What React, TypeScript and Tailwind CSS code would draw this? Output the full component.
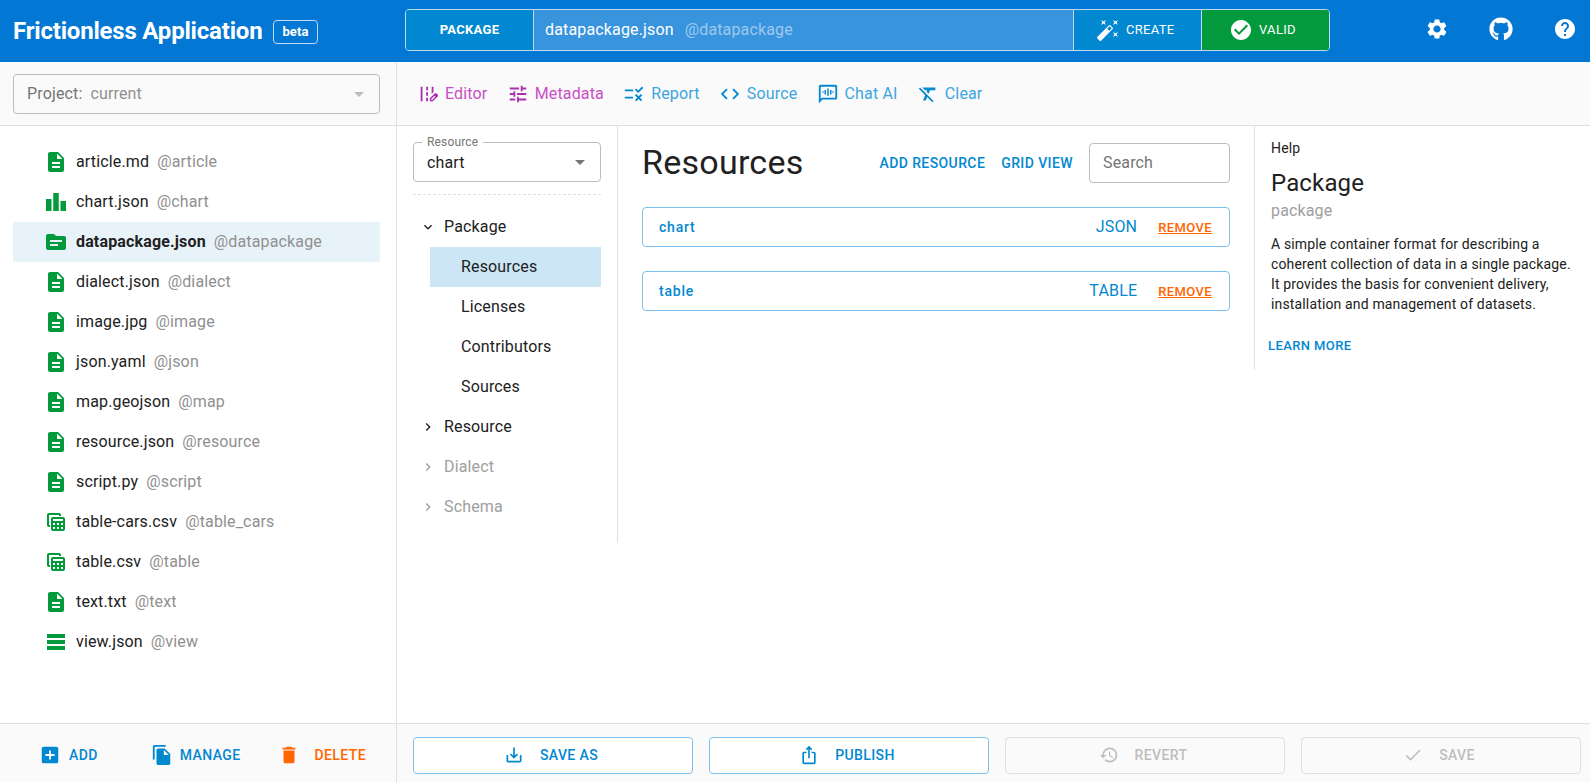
import { FaGithub } from "react-icons/fa";
import {
  MdAddBox,
  MdArrowDropDown,
  MdAutoFixHigh,
  MdCheck,
  MdCheckCircle,
  MdChevronRight,
  MdCode,
  MdDelete,
  MdDescription,
  MdEditRoad,
  MdExpandMore,
  MdFileCopy,
  MdFormatClear,
  MdHelp,
  MdHistory,
  MdIosShare,
  MdLeaderboard,
  MdOutlineTableView,
  MdRule,
  MdSaveAlt,
  MdSettings,
  MdSource,
  MdTableRows,
  MdTune,
} from "react-icons/md";

const files = [
  { name: "article.md", id: "@article", Icon: MdDescription },
  { name: "chart.json", id: "@chart", Icon: MdLeaderboard },
  { name: "datapackage.json", id: "@datapackage", Icon: MdSource, active: true },
  { name: "dialect.json", id: "@dialect", Icon: MdDescription },
  { name: "image.jpg", id: "@image", Icon: MdDescription },
  { name: "json.yaml", id: "@json", Icon: MdDescription },
  { name: "map.geojson", id: "@map", Icon: MdDescription },
  { name: "resource.json", id: "@resource", Icon: MdDescription },
  { name: "script.py", id: "@script", Icon: MdDescription },
  { name: "table-cars.csv", id: "@table_cars", Icon: MdOutlineTableView },
  { name: "table.csv", id: "@table", Icon: MdOutlineTableView },
  { name: "text.txt", id: "@text", Icon: MdDescription },
  { name: "view.json", id: "@view", Icon: MdTableRows },
];

function ChatAiIcon({ className }: { className?: string }) {
  return (
    <svg viewBox="0 0 24 24" className={className} fill="currentColor">
      <path d="M20 2H4c-1.1 0-2 .9-2 2v18l4-4h14c1.1 0 2-.9 2-2V4c0-1.1-.9-2-2-2zm0 14H5.2L4 17.2V4h16v12z" />
      <path d="M11.2 6h1.6v8h-1.6zM8.2 7.5h1.6v5H8.2zM14.2 7.5h1.6v5h-1.6zM6 9h1.2v2H6zM16.8 9H18v2h-1.2z" />
    </svg>
  );
}

const tabs = [
  { label: "Editor", Icon: MdEditRoad, purple: true },
  { label: "Metadata", Icon: MdTune, purple: true },
  { label: "Report", Icon: MdRule },
  { label: "Source", Icon: MdCode },
  { label: "Chat AI", Icon: ChatAiIcon },
  { label: "Clear", Icon: MdFormatClear },
];

function Cell({ name, type }: { name: string; type: string }) {
  return (
    <div className="flex h-10 items-center rounded border border-[#7cc1ec] pl-4 pr-[17px]">
      <span className="-mt-px text-sm font-medium tracking-[0.8px] text-[#0288d1]">{name}</span>
      <span className="ml-auto text-base text-[#0288d1]">{type}</span>
      <span className="ml-[21px] mt-[2px] text-[13px] font-medium tracking-[0.4px] text-[#ff6600] underline">REMOVE</span>
    </div>
  );
}

function FooterButton({
  label,
  icon,
  disabled,
}: {
  label: string;
  icon: React.ReactNode;
  disabled?: boolean;
}) {
  return (
    <div
      className={
        disabled
          ? "flex h-[37px] w-[280px] items-center justify-center gap-4 rounded border border-[#e0e0e0] pr-1 text-sm font-medium tracking-[0.4px] text-[#bdbdbd]"
          : "flex h-[37px] w-[280px] items-center justify-center gap-4 rounded border border-[#7cc1ec] bg-white pr-1 text-sm font-medium tracking-[0.4px] text-[#0288d1]"
      }
    >
      {icon}
      {label}
    </div>
  );
}

export default function App() {
  return (
    <div className="flex h-screen flex-col overflow-hidden bg-white font-['Roboto',sans-serif] tracking-[0.15px] text-[#212121]">
      {/* header */}
      <header className="flex h-[62px] shrink-0 items-center bg-[#0277d4] text-white">
        <div className="flex w-[405px] shrink-0 items-center pl-[13px]">
          <span className="text-2xl font-bold tracking-[-0.2px]">Frictionless Application</span>
          <span className="ml-[11px] mt-[2px] rounded border border-[#bcd9f2] px-2 py-[2px] text-[13px] font-bold leading-[18px]">
            beta
          </span>
        </div>
        <div className="-mt-[2px] flex h-[42px] w-[925px] overflow-hidden rounded border border-[#bcd9f2]">
          <div className="flex w-[127px] items-center justify-center bg-[#0288d1] text-[13px] font-bold tracking-[0.3px]">
            PACKAGE
          </div>
          <div className="flex flex-1 items-center gap-[11px] border-l border-[#bcd9f2] bg-[#3994de] pl-[11px] text-base">
            <span>datapackage.json</span>
            <span className="text-white/50">@datapackage</span>
          </div>
          <div className="flex w-[128px] items-center gap-[6px] border-l border-[#bcd9f2] bg-[#0288d1] pl-[22px] text-[13px] tracking-[0.3px]">
            <MdAutoFixHigh className="h-6 w-6" />
            CREATE
          </div>
          <div className="flex w-[128px] items-center gap-[6px] border-l border-[#bcd9f2] bg-[#029a3c] pl-[27px] text-[13px] tracking-[0.3px]">
            <MdCheckCircle className="h-6 w-6" />
            VALID
          </div>
        </div>
        <div className="ml-auto flex items-center gap-10 pb-[5px] pr-[13px]">
          <MdSettings className="h-6 w-6" />
          <FaGithub className="h-6 w-6" />
          <MdHelp className="h-6 w-6" />
        </div>
      </header>

      <div className="flex min-h-0 flex-1">
        {/* file browser */}
        <aside className="flex w-[397px] shrink-0 flex-col border-r border-[#e0e0e0]">
          <div className="flex h-[64px] shrink-0 items-center border-b border-[#e0e0e0] bg-[#fafafa] pl-[13px] pr-4">
            <div className="flex h-10 w-full items-center rounded border border-[#bdbdbd] pl-[13px] pr-2 text-base">
              <span className="text-[#757575]">Project:</span>
              <span className="ml-2 text-[#909090]">current</span>
              <MdArrowDropDown className="ml-auto h-6 w-6 text-[#bdbdbd]" />
            </div>
          </div>
          <div className="flex-1 pl-[13px] pr-[16px] pt-[16px]">
            {files.map((file) => (
              <div
                key={file.name}
                className={file.active ? "flex h-10 items-center bg-[#e8f3f9] pl-[31px]" : "flex h-10 items-center pl-[31px]"}
              >
                <file.Icon className="h-[24px] w-[24px] shrink-0 text-[#029a3c]" />
                <span className={file.active ? "ml-2 font-bold" : "ml-2"}>{file.name}</span>
                <span className="ml-[8px] text-[#909090]">{file.id}</span>
              </div>
            ))}
          </div>
          <div className="flex h-[59px] shrink-0 items-center border-t border-[#e0e0e0] bg-[#fafafa] pl-[39px] pt-1 text-sm font-medium tracking-[0.4px]">
            <div className="flex items-center gap-2 text-[#0288d1]">
              <MdAddBox className="h-[22px] w-[22px]" />
              ADD
            </div>
            <div className="ml-[53px] flex items-center gap-[7px] text-[#0288d1]">
              <MdFileCopy className="h-[22px] w-[22px]" />
              MANAGE
            </div>
            <div className="ml-[37px] flex items-center gap-[15px] text-[#ff6600]">
              <MdDelete className="h-[22px] w-[22px]" />
              DELETE
            </div>
          </div>
        </aside>

        <div className="flex min-w-0 flex-1 flex-col">
          {/* toolbar */}
          <div className="flex h-[64px] shrink-0 items-center gap-[19.25px] border-b border-[#e0e0e0] bg-[#fafafa] pl-5">
            {tabs.map((tab) => (
              <div
                key={tab.label}
                className={tab.purple ? "flex items-center gap-[6px] text-[#c94fc4]" : "flex items-center gap-[6px] text-[#3da4e0]"}
              >
                <tab.Icon className={tab.purple ? "h-[22px] w-[22px] text-[#ab2fb0]" : "h-[22px] w-[22px] text-[#0288d1]"} />
                {tab.label}
              </div>
            ))}
          </div>

          <div className="flex min-h-0 flex-1 items-start">
            {/* section tree */}
            <div className="h-[417px] w-[221px] shrink-0 border-r border-[#e0e0e0] pl-[16px] pr-[16px] pt-[16px]">
              <div className="relative flex h-10 items-center rounded border border-[#bdbdbd] pl-[13px] pr-2">
                <span className="absolute -top-[9px] left-2 bg-white px-[5px] text-xs leading-4 text-[#757575]">Resource</span>
                <span className="pt-[2px]">chart</span>
                <MdArrowDropDown className="ml-auto h-6 w-6 text-[#757575]" />
              </div>
              <div className="my-3 border-b border-dashed border-[#e0e0e0]" />
              <div className="flex h-10 items-center pl-[7px]">
                <MdExpandMore className="h-4 w-4" />
                <span className="ml-[8px]">Package</span>
              </div>
              <div className="ml-[17px] flex h-10 items-center bg-[#cce6f5] pl-[31px]">Resources</div>
              <div className="ml-[17px] flex h-10 items-center pl-[31px]">Licenses</div>
              <div className="ml-[17px] flex h-10 items-center pl-[31px]">Contributors</div>
              <div className="ml-[17px] flex h-10 items-center pl-[31px]">Sources</div>
              <div className="flex h-10 items-center pl-[7px]">
                <MdChevronRight className="h-4 w-4" />
                <span className="ml-[8px]">Resource</span>
              </div>
              <div className="flex h-10 items-center pl-[7px] text-[#9e9e9e]">
                <MdChevronRight className="h-4 w-4" />
                <span className="ml-[8px]">Dialect</span>
              </div>
              <div className="flex h-10 items-center pl-[7px] text-[#9e9e9e]">
                <MdChevronRight className="h-4 w-4" />
                <span className="ml-[8px]">Schema</span>
              </div>
            </div>

            {/* resources */}
            <main className="w-[636px] shrink-0 pl-[24px] pr-[24px] pt-[17px]">
              <div className="flex h-10 items-center">
                <h1 className="-mt-[2px] text-[34px] font-normal leading-10 tracking-[0.25px]">Resources</h1>
                <div className="ml-auto flex items-center text-sm font-medium tracking-[0.4px] text-[#0288d1]">
                  <span>ADD RESOURCE</span>
                  <span className="ml-4">GRID VIEW</span>
                </div>
                <div className="ml-4 flex h-10 w-[141px] items-center rounded border border-[#bdbdbd] pl-[13px] text-[#757575]">
                  Search
                </div>
              </div>
              <div className="mt-6 flex flex-col gap-6">
                <Cell name="chart" type="JSON" />
                <Cell name="table" type="TABLE" />
              </div>
            </main>

            {/* help */}
            <section className="h-[244px] flex-1 border-l border-[#e0e0e0] pl-4 pr-2 pt-3">
              <div className="text-sm leading-5">Help</div>
              <div className="mt-[9px] text-2xl leading-8">Package</div>
              <div className="mt-[2px] leading-5 text-[#9e9e9e]">package</div>
              <p className="mt-[13px] text-sm leading-5">
                A simple container format for describing a coherent collection of data in a single package. It provides
                the basis for convenient delivery, installation and management of datasets.
              </p>
              <div className="-ml-[3px] mt-[22px] text-[13px] font-medium tracking-[0.4px] text-[#0288d1]">LEARN MORE</div>
            </section>
          </div>

          {/* actions */}
          <div className="flex h-[59px] shrink-0 items-center gap-4 border-t border-[#e0e0e0] bg-[#fafafa] pl-4 pt-1">
            <FooterButton label="SAVE AS" icon={<MdSaveAlt className="h-5 w-5" />} />
            <FooterButton label="PUBLISH" icon={<MdIosShare className="h-5 w-5" />} />
            <FooterButton label="REVERT" disabled icon={<MdHistory className="h-5 w-5" />} />
            <FooterButton label="SAVE" disabled icon={<MdCheck className="h-5 w-5" />} />
          </div>
        </div>
      </div>
    </div>
  );
}
